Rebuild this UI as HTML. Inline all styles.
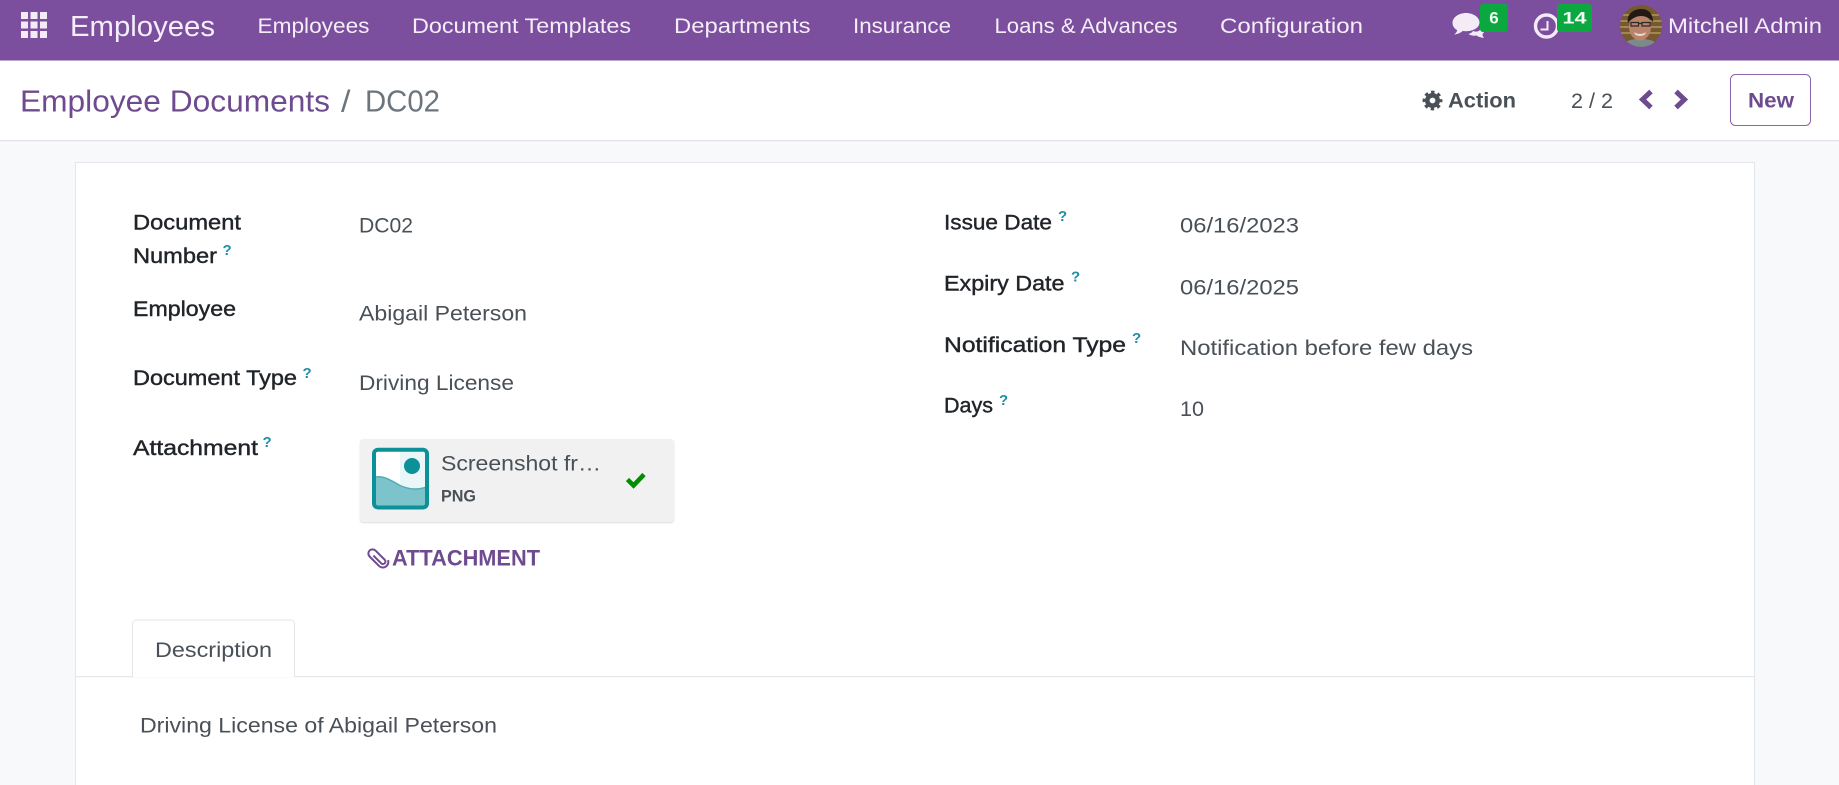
<!DOCTYPE html>
<html lang="en"><head><meta charset="utf-8"><title>Employee Documents / DC02</title>
<style>
html,body{margin:0;padding:0;width:1839px;height:785px;overflow:hidden;background:#f8f9fb}
svg{display:block}
text{font-family:"Liberation Sans",sans-serif;white-space:pre}
.n{font-size:21.5px;fill:#f4eef8}
.l{font-size:21px;fill:#212529;stroke:#212529;stroke-width:.4px}
.v{font-size:21px;fill:#495057}
.q{font-size:15px;font-weight:700;fill:#1f8ea6}
.b{font-size:17px;font-weight:700;fill:#f2fbf4}
</style></head><body>
<svg xmlns="http://www.w3.org/2000/svg" width="1839" height="785" viewBox="0 0 1839 785">
<defs><clipPath id="av"><circle cx="1641" cy="26" r="21"/></clipPath>
<clipPath id="ic"><rect x="373.500" y="449" width="54" height="59" rx="3"/></clipPath>
<filter id="bl" x="-20%" y="-20%" width="140%" height="140%"><feGaussianBlur stdDeviation=".7"/></filter></defs>
<rect width="1839" height="785" fill="#f8f9fb"/>
<!-- navbar -->
<rect width="1839" height="60.500" fill="#7b4f9e"/>
<g fill="#f3ecf7">
<rect x="21" y="12" width="7" height="7"/><rect x="30.500" y="12" width="7" height="7"/><rect x="40" y="12" width="7" height="7"/>
<rect x="21" y="21.500" width="7" height="7"/><rect x="30.500" y="21.500" width="7" height="7"/><rect x="40" y="21.500" width="7" height="7"/>
<rect x="21" y="31" width="7" height="7"/><rect x="30.500" y="31" width="7" height="7"/><rect x="40" y="31" width="7" height="7"/>
</g>
<text x="70" y="36" font-size="28.500" fill="#f4eef8" textLength="145" lengthAdjust="spacingAndGlyphs">Employees</text>
<text class="n" x="257.500" y="33" textLength="112" lengthAdjust="spacingAndGlyphs">Employees</text>
<text class="n" x="412" y="33" textLength="219" lengthAdjust="spacingAndGlyphs">Document Templates</text>
<text class="n" x="674" y="33" textLength="136.500" lengthAdjust="spacingAndGlyphs">Departments</text>
<text class="n" x="853" y="33" textLength="98" lengthAdjust="spacingAndGlyphs">Insurance</text>
<text class="n" x="994.500" y="33" textLength="183" lengthAdjust="spacingAndGlyphs">Loans &amp; Advances</text>
<text class="n" x="1220" y="33" textLength="143" lengthAdjust="spacingAndGlyphs">Configuration</text>
<!-- chat icon -->
<path d="M1473 31c5 2 8.500-1 9-6 3 2.500 3.500 6.500 .5 9 0 1.500 .5 3 1.500 4-3-.5-5.500-1-7.500-2.500-3 .5-6 0-8-1.500 2-.5 3.500-1.500 4.500-3z" fill="#f3ecf7"/>
<path d="M1466 13c-7.500 0-13.500 4.500-13.500 10 0 3 2 5.700 4.800 7.300-.5 1.500-1.500 3-3 4.200 3.300-.3 6.500-1.700 8.500-3.600 1 .2 2.200 .3 3.200 .3 7.500 0 13.500-3.700 13.500-8.700s-6-9.500-13.500-9.500z" fill="#f3ecf7"/>
<rect x="1480" y="4" width="28" height="28" rx="3" fill="#0aa83f"/>
<text class="b" x="1494" y="23.500" text-anchor="middle">6</text>
<!-- clock icon -->
<circle cx="1546.500" cy="26" r="11" fill="none" stroke="#f3ecf7" stroke-width="3.400"/>
<path d="M1540.500 29.500h7v-8.500" fill="none" stroke="#f3ecf7" stroke-width="2"/>
<rect x="1557" y="4" width="35" height="28" rx="3" fill="#0aa83f"/>
<text class="b" x="1574.500" y="23.500" text-anchor="middle" textLength="24" lengthAdjust="spacingAndGlyphs">14</text>
<!-- avatar -->
<g clip-path="url(#av)">
<rect x="1620" y="5" width="42" height="42" fill="#77592f"/>
<path d="M1620 15h42M1620 21h42M1620 27h42M1620 33h42" stroke="#a18752" stroke-width="2"/>
<path d="M1622 47c2-6 8-8 18-8s17 2 19 8z" fill="#7d8a8c"/>
<ellipse cx="1640" cy="27" rx="11" ry="13.500" fill="#b9846a"/>
<path d="M1628 23c-2-9 6-14 13-14 7 0 12 4 12 13-3-4-8-6-12-6s-9 2-13 7z" fill="#241a15"/>
<path d="M1631 22.500h7.500v3.500h-7.500zM1642 22.500h8v3.500h-8zM1638.500 23.500h3.500" fill="none" stroke="#2a2a2a" stroke-width="1.200"/>
<path d="M1634 32c3 2.500 9 2.500 12 0l-1 2.500c-3 2-7 2-10 0z" fill="#e9dcd3"/>
</g>
<text class="n" x="1668" y="33" textLength="154" lengthAdjust="spacingAndGlyphs">Mitchell Admin</text>
<!-- control panel -->
<rect y="60.500" width="1839" height="79.500" fill="#fff"/>
<rect y="140" width="1839" height="1.200" fill="#dee2e6"/>
<text x="20" y="111.500" font-size="31" fill="#6e4b8f" textLength="310" lengthAdjust="spacingAndGlyphs">Employee Documents</text>
<text x="341" y="111.500" font-size="31" fill="#6c757d" textLength="9.500" lengthAdjust="spacingAndGlyphs">/</text>
<text x="365" y="111.500" font-size="31" fill="#6c757d" textLength="75" lengthAdjust="spacingAndGlyphs">DC02</text>
<!-- gear -->
<circle cx="1432.500" cy="100.500" r="5.200" fill="none" stroke="#495057" stroke-width="4.600"/>
<circle cx="1432.500" cy="100.500" r="8.400" fill="none" stroke="#495057" stroke-width="3" stroke-dasharray="3.400 3.200" stroke-dashoffset="1.700"/>
<text x="1448" y="107.700" font-size="21.500" font-weight="700" fill="#495057" textLength="68" lengthAdjust="spacingAndGlyphs">Action</text>
<text x="1571" y="108" font-size="21" fill="#495057" textLength="42" lengthAdjust="spacingAndGlyphs">2 / 2</text>
<path d="M1651 91.500l-8.500 8 8.500 8" fill="none" stroke="#6e4b8f" stroke-width="5"/>
<path d="M1676 91.500l8.500 8-8.500 8" fill="none" stroke="#6e4b8f" stroke-width="5"/>
<rect x="1730.500" y="74.500" width="80" height="51" rx="5" fill="#fff" stroke="#8a63a9"/>
<text x="1748" y="107.700" font-size="21.500" font-weight="700" fill="#6e4b8f" textLength="46" lengthAdjust="spacingAndGlyphs">New</text>
<!-- sheet -->
<rect x="75.500" y="162.500" width="1679" height="640" fill="#fff" stroke="#e3e6ea"/>
<!-- left group -->
<text class="l" x="133" y="229.500" textLength="108" lengthAdjust="spacingAndGlyphs">Document</text>
<text class="l" x="133" y="263" textLength="84" lengthAdjust="spacingAndGlyphs">Number</text>
<text class="q" x="222.500" y="255">?</text>
<text class="v" x="359" y="232.500" textLength="54" lengthAdjust="spacingAndGlyphs">DC02</text>
<text class="l" x="133" y="316" textLength="103" lengthAdjust="spacingAndGlyphs">Employee</text>
<text class="v" x="359" y="320.500" textLength="168" lengthAdjust="spacingAndGlyphs">Abigail Peterson</text>
<text class="l" x="133" y="385" textLength="164" lengthAdjust="spacingAndGlyphs">Document Type</text>
<text class="q" x="302.500" y="378">?</text>
<text class="v" x="359" y="390" textLength="155" lengthAdjust="spacingAndGlyphs">Driving License</text>
<text class="l" x="133" y="455" textLength="125" lengthAdjust="spacingAndGlyphs">Attachment</text>
<text class="q" x="262.500" y="447">?</text>
<!-- attachment card -->
<rect x="360" y="440" width="314" height="83" rx="3" fill="#dcdcdc" filter="url(#bl)"/>
<rect x="360" y="439" width="314" height="83" rx="3" fill="#f1f1f1"/>
<g clip-path="url(#ic)">
<rect x="373" y="448" width="55" height="61" fill="#fff"/>
<path d="M400 449h28v38c-10 4-19 3-28-1z" fill="#eaf6f7"/>
<path d="M373 477.500c10-3 18 3 27 8 9 4 18 5 28 1v23h-55z" fill="#7cc3cb"/>
<path d="M373 477.500c10-3 18 3 27 8 9 4 18 5 28 1" fill="none" stroke="#55adb5" stroke-width="1.500"/>
</g>
<rect x="374" y="449.700" width="53" height="57.800" rx="4" fill="none" stroke="#0d9199" stroke-width="4"/>
<circle cx="412" cy="466" r="8" fill="#0d9199"/>
<text x="441" y="470.500" font-size="21.500" fill="#495057" textLength="160" lengthAdjust="spacingAndGlyphs">Screenshot fr…</text>
<text x="441" y="501.700" font-size="17" font-weight="700" fill="#495057" textLength="35" lengthAdjust="spacingAndGlyphs">PNG</text>
<path d="M627.500 479.500l6 6 10.500-11" fill="none" stroke="#008f00" stroke-width="4.600"/>
<g transform="translate(378 558) rotate(-45)">
<path d="M-1.500-5V6a2.500 2.500 0 0 0 5 0V-7a4.200 4.200 0 0 0-8.400 0V6.500a5.500 5.500 0 0 0 10.500 2" fill="none" stroke="#6e4b8f" stroke-width="2"/>
</g>
<text x="392" y="565.500" font-size="22.500" font-weight="700" fill="#6e4b8f" textLength="148" lengthAdjust="spacingAndGlyphs">ATTACHMENT</text>
<!-- right group -->
<text class="l" x="944" y="229.500" textLength="108" lengthAdjust="spacingAndGlyphs">Issue Date</text>
<text class="q" x="1058" y="221">?</text>
<text class="v" x="1180" y="232.500" textLength="119" lengthAdjust="spacingAndGlyphs">06/16/2023</text>
<text class="l" x="944" y="290.500" textLength="120.500" lengthAdjust="spacingAndGlyphs">Expiry Date</text>
<text class="q" x="1071" y="281.700">?</text>
<text class="v" x="1180" y="294.500" textLength="119" lengthAdjust="spacingAndGlyphs">06/16/2025</text>
<text class="l" x="944" y="352" textLength="182" lengthAdjust="spacingAndGlyphs">Notification Type</text>
<text class="q" x="1132" y="343">?</text>
<text class="v" x="1180" y="355.200" textLength="293" lengthAdjust="spacingAndGlyphs">Notification before few days</text>
<text class="l" x="944" y="412.500" textLength="49" lengthAdjust="spacingAndGlyphs">Days</text>
<text class="q" x="999" y="405">?</text>
<text class="v" x="1180" y="416" textLength="24" lengthAdjust="spacingAndGlyphs">10</text>
<!-- tabs -->
<rect x="76" y="676" width="1678" height="1.200" fill="#e3e6ea"/>
<path d="M132.500 677V624a4 4 0 0 1 4-4H290.500a4 4 0 0 1 4 4V677" fill="#fff" stroke="#e3e6ea"/>
<text x="155" y="657" font-size="21" fill="#495057" textLength="117" lengthAdjust="spacingAndGlyphs">Description</text>
<text class="v" x="140" y="732.500" textLength="357" lengthAdjust="spacingAndGlyphs">Driving License of Abigail Peterson</text>
</svg>
</body></html>
